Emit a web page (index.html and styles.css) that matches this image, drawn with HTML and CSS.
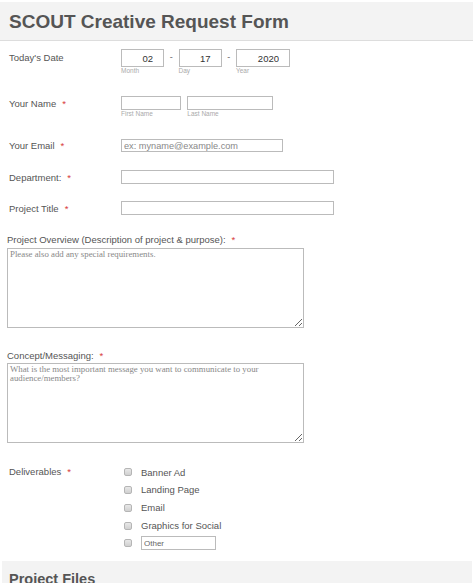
FILE: index.html
```html
<!DOCTYPE html>
<html>
<head>
<meta charset="utf-8">
<link rel="stylesheet" href="styles.css">
</head>
<body>
<div class="header"><h1>SCOUT Creative Request Form</h1></div>
<form class="form">
  <div class="line date-line">
    <div class="label tall">Today's Date</div>
    <div class="date">
      <div class="sub"><input class="box num month" value="02"><span class="hint">Month</span></div>
      <span class="dash">-</span>
      <div class="sub"><input class="box num day" value="17"><span class="hint">Day</span></div>
      <span class="dash">-</span>
      <div class="sub"><input class="box num year" value="2020"><span class="hint">Year</span></div>
    </div>
  </div>

  <div class="line name-line">
    <div class="label short">Your Name<span class="req">*</span></div>
    <div class="name">
      <div class="sub"><input class="box small first"><span class="hint">First Name</span></div>
      <div class="sub"><input class="box small last"><span class="hint">Last Name</span></div>
    </div>
  </div>

  <div class="line email-line">
    <div class="label short">Your Email<span class="req">*</span></div>
    <input class="box small email" placeholder="ex: myname@example.com">
  </div>

  <div class="line dept-line">
    <div class="label short">Department:<span class="req">*</span></div>
    <input class="box small wide">
  </div>

  <div class="line title-line">
    <div class="label short">Project Title<span class="req">*</span></div>
    <input class="box small wide">
  </div>

  <div class="block overview">
    <div class="label top">Project Overview (Description of project &amp; purpose):<span class="req">*</span></div>
    <textarea class="area" placeholder="Please also add any special requirements."></textarea>
  </div>

  <div class="block concept">
    <div class="label top">Concept/Messaging:<span class="req">*</span></div>
    <textarea class="area" placeholder="What is the most important message you want to communicate to your audience/members?"></textarea>
  </div>

  <div class="line deliv-line">
    <div class="label deliv">Deliverables<span class="req">*</span></div>
    <div class="options">
      <label class="opt"><input type="checkbox" class="cb">Banner Ad</label>
      <label class="opt"><input type="checkbox" class="cb">Landing Page</label>
      <label class="opt"><input type="checkbox" class="cb">Email</label>
      <label class="opt"><input type="checkbox" class="cb">Graphics for Social</label>
      <label class="opt"><input type="checkbox" class="cb"><input class="box other" placeholder="Other"></label>
    </div>
  </div>

  <div class="section"><h2>Project Files</h2></div>
</form>
</body>
</html>
```

FILE: styles.css
```css
html, body {
  margin: 0;
  padding: 0;
  background: #fff;
  overflow: hidden;
}
body {
  font-family: "Liberation Sans", Arial, sans-serif;
  color: #555;
  font-size: 9.5px;
}
.header {
  margin-top: 2px;
  margin-right: 1px;
  height: 38px;
  background: #f3f3f3;
  border-bottom: 1px solid #ddd;
  display: flex;
  align-items: center;
  padding-left: 9px;
}
.header h1 {
  margin: 0;
  font-size: 19px;
  font-weight: bold;
  color: #555;
  line-height: 1;
  padding-top: 1px;
}
.form {
  display: flex;
  flex-direction: column;
}
.line {
  display: grid;
  grid-template-columns: 121px auto;
  align-items: start;
}
.label {
  padding-left: 9px;
  color: #555;
  white-space: nowrap;
}
.req {
  color: #d83a3a;
  margin-left: 6px;
}
.label.tall { line-height: 18px; }
.label.short { line-height: 12px; padding-top: 1.5px; }
.box {
  box-sizing: border-box;
  border: 1px solid #bbb;
  border-radius: 0;
  background: #fff;
  margin: 0;
  padding: 0 2px;
  font-family: "Liberation Sans", Arial, sans-serif;
  color: #333;
  outline: none;
  -webkit-appearance: none;
  appearance: none;
  display: block;
}
.box::placeholder { color: #888; }
.sub {
  display: flex;
  flex-direction: column;
}
.hint {
  font-size: 6.5px;
  line-height: 8px;
  color: #aaa;
}
.date-line { margin-top: 8px; }
.date { display: flex; align-items: flex-start; }
.num {
  height: 18px;
  font-size: 9.5px;
  text-align: right;
  padding-right: 10px;
}
.month, .day { width: 43px; }
.year { width: 54px; }
.dash {
  width: 14.5px;
  text-align: center;
  line-height: 16px;
  color: #666;
  font-size: 9px;
}
.small { height: 13.5px; font-size: 9.2px; }
.name-line { margin-top: 21px; }
.name { display: flex; gap: 6.3px; }
.first { width: 60px; }
.last { width: 86px; }
.email-line { margin-top: 21.3px; }
.email { width: 162px; padding-left: 2px; }
.dept-line { margin-top: 18px; }
.title-line { margin-top: 17.3px; }
.wide { width: 213px; }
.block {
  display: flex;
  flex-direction: column;
  padding-left: 7px;
}
.label.top {
  padding-left: 0;
  line-height: 11px;
}
.overview { margin-top: 19px; }
.overview .area { margin-top: 3.4px; }
.concept { margin-top: 22px; }
.concept .area { margin-top: 2px; }
.area {
  box-sizing: border-box;
  width: 297px;
  height: 80px;
  border: 1px solid #bbb;
  margin: 0;
  padding: 1px 2px;
  font-family: "Liberation Serif", "Times New Roman", serif;
  font-size: 8.8px;
  line-height: 9.5px;
  color: #333;
  outline: none;
  resize: both;
}
.area::placeholder { color: #888; }
.deliv-line { margin-top: 20.3px; }
.label.deliv { line-height: 11px; padding-top: 2.5px; }
.options { display: flex; flex-direction: column; }
.opt {
  height: 17.8px;
  display: flex;
  align-items: center;
  color: #555;
  font-size: 9.5px;
}
.cb {
  -webkit-appearance: none;
  appearance: none;
  box-sizing: border-box;
  width: 8px;
  height: 8px;
  margin: 0 9px 0 3px;
  border: 1px solid #b5b5b5;
  border-radius: 2px;
  background: linear-gradient(#e8e8e8, #d0d0d0);
}
.other {
  width: 75px;
  height: 14px;
  font-size: 8px;
}
.other::placeholder { color: #666; }
.section {
  margin-top: 8.5px;
  margin-left: 2px;
  margin-right: 2px;
  background: #f3f3f3;
  height: 40px;
  padding-left: 7px;
  padding-top: 10px;
  box-sizing: border-box;
}
.section h2 {
  margin: 0;
  font-size: 14.5px;
  font-weight: bold;
  color: #555;
  line-height: 16px;
}
```
